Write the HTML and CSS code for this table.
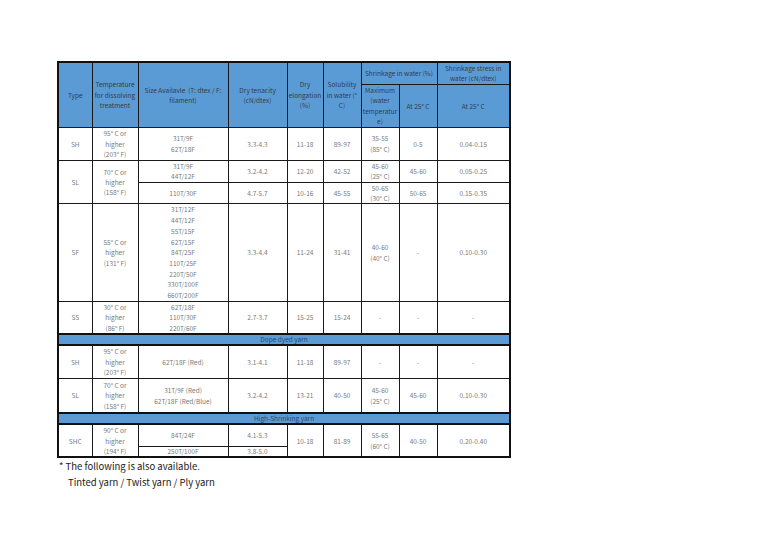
FILE: index.html
```html
<!DOCTYPE html>
<html lang="en">
<head>
<meta charset="utf-8">
<title>Yarn specifications</title>
<link rel="stylesheet" href="styles.css">
</head>
<body>
<div class="page">
<table class="spec">
<colgroup>
<col class="c-type"><col class="c-temp"><col class="c-size"><col class="c-ten"><col class="c-elo"><col class="c-sol"><col class="c-max"><col class="c-at"><col class="c-str">
</colgroup>
<thead>
<tr class="h1">
<th rowspan="2">Type</th>
<th rowspan="2">Temperature<br>for dissolving<br>treatment</th>
<th rowspan="2">Size Availavle&nbsp; (T: dtex / F:<br>filament)</th>
<th rowspan="2">Dry tenacity<br>(cN/dtex)</th>
<th rowspan="2">Dry<br>elongation<br>(%)</th>
<th rowspan="2">Solubility<br>in water (°<br>C)</th>
<th colspan="2">Shrinkage in water (%)</th>
<th>Shrinkage stress in<br>water (cN/dtex)</th>
</tr>
<tr class="h2">
<th>Maximum<br>(water<br>temperatur<br>e)</th>
<th>At 25° C</th>
<th>At 25° C</th>
</tr>
</thead>
<tbody>
<tr class="r33">
<td>SH</td><td>95° C or<br>higher<br>(203° F)</td><td>31T/9F<br>62T/18F</td><td>3.3-4.3</td><td>11-18</td><td>89-97</td><td>35-55<br>(85° C)</td><td>0-5</td><td>0.04-0.15</td>
</tr>
<tr class="r22">
<td rowspan="2">SL</td><td rowspan="2">70° C or<br>higher<br>(158° F)</td><td>31T/9F<br>44T/12F</td><td>3.2-4.2</td><td>12-20</td><td>42-52</td><td>45-60<br>(25° C)</td><td>45-60</td><td>0.05-0.25</td>
</tr>
<tr class="r22">
<td>110T/30F</td><td>4.7-5.7</td><td>10-16</td><td>45-55</td><td>50-65<br>(30° C)</td><td>50-65</td><td>0.15-0.35</td>
</tr>
<tr class="r98">
<td>SF</td><td>55° C or<br>higher<br>(131° F)</td><td class="list">31T/12F<br>44T/12F<br>55T/15F<br>62T/15F<br>84T/25F<br>110T/25F<br>220T/50F<br>330T/100F<br>660T/200F</td><td>3.3-4.4</td><td>11-24</td><td>31-41</td><td>40-60<br>(40° C)</td><td>-</td><td>0.10-0.30</td>
</tr>
<tr class="r33">
<td>SS</td><td>30° C or<br>higher<br>(86° F)</td><td>62T/18F<br>110T/30F<br>220T/60F</td><td>2.7-3.7</td><td>15-25</td><td>15-24</td><td>-</td><td>-</td><td>-</td>
</tr>
<tr class="band">
<td colspan="9">Dope dyed yarn</td>
</tr>
<tr class="r33">
<td>SH</td><td>95° C or<br>higher<br>(203° F)</td><td>62T/18F (Red)</td><td>3.1-4.1</td><td>11-18</td><td>89-97</td><td>-</td><td>-</td><td>-</td>
</tr>
<tr class="r34">
<td>SL</td><td>70° C or<br>higher<br>(158° F)</td><td>31T/9F (Red)<br>62T/18F (Red/Blue)</td><td>3.2-4.2</td><td>13-21</td><td>40-50</td><td>45-60<br>(25° C)</td><td>45-60</td><td>0.10-0.30</td>
</tr>
<tr class="band">
<td colspan="9">High-Shrinking yarn</td>
</tr>
<tr class="r22">
<td rowspan="2">SHC</td><td rowspan="2">90° C or<br>higher<br>(194° F)</td><td>84T/24F</td><td>4.1-5.3</td><td rowspan="2">10-18</td><td rowspan="2">81-89</td><td rowspan="2">55-65<br>(60° C)</td><td rowspan="2">40-50</td><td rowspan="2">0.20-0.40</td>
</tr>
<tr class="r11">
<td class="tight">250T/100F</td><td class="tight">3.8-5.0</td>
</tr>
</tbody>
</table>
<div class="note">
<p class="note-line">* The following is also available.</p>
<p class="note-line indent">Tinted yarn / Twist yarn / Ply yarn</p>
</div>
</div>
</body>
</html>
```
FILE: styles.css
```css
html, body {
  margin: 0;
  padding: 0;
  background: #ffffff;
}
.page {
  padding: 61px 0 0 57px;
  font-family: "Noto Sans CJK JP", "Noto Sans", sans-serif;
}
.spec {
  border-collapse: collapse;
  table-layout: fixed;
  width: 452px;
  border: 2px solid #111;
  font-size: 6.5px;
  line-height: 10.4px;
}
.c-type { width: 34px; }
.c-temp { width: 46px; }
.c-size { width: 90px; }
.c-ten { width: 59px; }
.c-elo { width: 36px; }
.c-sol { width: 38px; }
.c-max { width: 38px; }
.c-at { width: 38px; }
.c-str { width: 73px; }
.spec th, .spec td {
  border: 1px solid #1a1a1a;
  padding: 0;
  text-align: center;
  vertical-align: middle;
  overflow: hidden;
  white-space: nowrap;
}
.spec th {
  background: #5b9bd5;
  color: #333c48;
  font-weight: normal;
}
.spec td {
  color: #7a7a7a;
}
.h1 { height: 22px; }
.h2 { height: 43px; }
.r33 { height: 33px; }
.r34 { height: 35px; }
.r22 { height: 21px; }
.r11 { height: 11px; }
.r98 { height: 97px; }
.spec td.list {
  line-height: 10.7px;
}
.spec td.tight {
  line-height: 9px;
}
.spec tr.band td {
  background: #5b9bd5;
  color: #2a4670;
  height: 9px;
  line-height: 9px;
  border-top: 2px solid #111;
  border-bottom: 2px solid #111;
}
.note {
  font-size: 9.5px;
  line-height: 16px;
  color: #222;
  padding-left: 2px;
}
.note-line {
  margin: 0;
}
.indent {
  padding-left: 9px;
}
```
